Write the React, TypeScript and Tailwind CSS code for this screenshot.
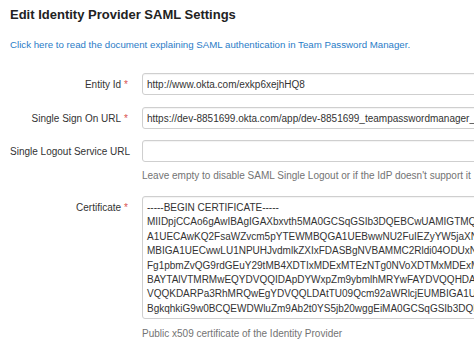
import React from 'react'

const certLines = [
  '-----BEGIN CERTIFICATE-----',
  'MIIDpjCCAo6gAwIBAgIGAXbxvth5MA0GCSqGSIb3DQEBCwUAMIGTMQswCQYDVQQGEwJVUzET',
  'A1UECAwKQ2FsaWZvcm5pYTEWMBQGA1UEBwwNU2FuIEZyYW5jaXNjbzENMAsGA1UECgwET2t0',
  'MBIGA1UECwwLU1NPUHJvdmlkZXIxFDASBgNVBAMMC2Rldi04ODUxNjk5MRwwGgYJKoZIhvcN',
  'Fg1pbmZvQG9rdGEuY29tMB4XDTIxMDExMTEzNTg0NVoXDTMxMDExMTEzNTk0NVowgZMxCzAJ',
  'BAYTAlVTMRMwEQYDVQQIDApDYWxpZm9ybmlhMRYwFAYDVQQHDA1TYW4gRnJhbmNpc2NvMQ0w',
  'VQQKDARPa3RhMRQwEgYDVQQLDAtTU09Qcm92aWRlcjEUMBIGA1UEAwwLZGV2LTg4NTE2OTkx',
  'BgkqhkiG9w0BCQEWDWluZm9Ab2t0YS5jb20wggEiMA0GCSqGSIb3DQEBAQUAA4IBDwAwggEK',
]

function Label({ text, required }: { text: string; required?: boolean }) {
  return (
    <div className="w-[118px] flex-none text-right text-[10px] text-[#333] whitespace-nowrap">
      {text}
      {required && <span className="ml-[3px] text-[#d9534f]">*</span>}
    </div>
  )
}

function TextInput({ value }: { value: string }) {
  return (
    <div className="h-[22px] w-[360px] flex-none flex items-center rounded-[3px] border border-[#cfcfcf] px-[4px] text-[10px] text-[#333] whitespace-nowrap overflow-hidden shadow-[inset_0_1px_1px_rgba(0,0,0,0.05)]">
      {value}
    </div>
  )
}

export default function App() {
  return (
    <div className="w-[474px] h-[347px] overflow-hidden bg-white pl-[10px] font-['Liberation_Sans',Arial,sans-serif]">
      <h1 className="pt-[6px] text-[13px] leading-[18px] font-bold text-[#222]">
        Edit Identity Provider SAML Settings
      </h1>
      <a className="mt-[14px] block text-[9.7px] leading-[14px] text-[#2a7cc7] whitespace-nowrap">
        Click here to read the document explaining SAML authentication in Team Password Manager.
      </a>

      <div className="mt-[21px] flex flex-col">
        <div className="flex items-center gap-[14px]">
          <Label text="Entity Id" required />
          <TextInput value="http://www.okta.com/exkp6xejhHQ8" />
        </div>
        <div className="mt-[12px] flex items-center gap-[14px]">
          <Label text="Single Sign On URL" required />
          <TextInput value="https://dev-8851699.okta.com/app/dev-8851699_teampasswordmanager_1/exkp6xejhHQ8/sso/saml" />
        </div>
        <div className="mt-[11px] flex items-center gap-[14px]">
          <Label text="Single Logout Service URL" />
          <TextInput value="" />
        </div>
        <div className="flex gap-[14px]">
          <div className="w-[118px] flex-none" />
          <p className="pt-[7px] text-[10px] leading-[14px] text-[#737373] whitespace-nowrap">
            Leave empty to disable SAML Single Logout or if the IdP doesn't support it
          </p>
        </div>
        <div className="mt-[13px] flex items-start gap-[14px]">
          <div className="pt-[4px]">
            <Label text="Certificate" required />
          </div>
          <div className="w-[360px] h-[123px] flex-none rounded-[3px] border border-[#cfcfcf] px-[4px] pt-[4px] text-[10px] leading-[14.4px] text-[#333] whitespace-nowrap overflow-hidden shadow-[inset_0_1px_1px_rgba(0,0,0,0.05)]">
            {certLines.map(l => (
              <div key={l}>{l}</div>
            ))}
          </div>
        </div>
        <div className="flex gap-[14px]">
          <div className="w-[118px] flex-none" />
          <p className="pt-[8px] text-[10px] leading-[14px] text-[#737373] whitespace-nowrap">
            Public x509 certificate of the Identity Provider
          </p>
        </div>
      </div>
    </div>
  )
}
